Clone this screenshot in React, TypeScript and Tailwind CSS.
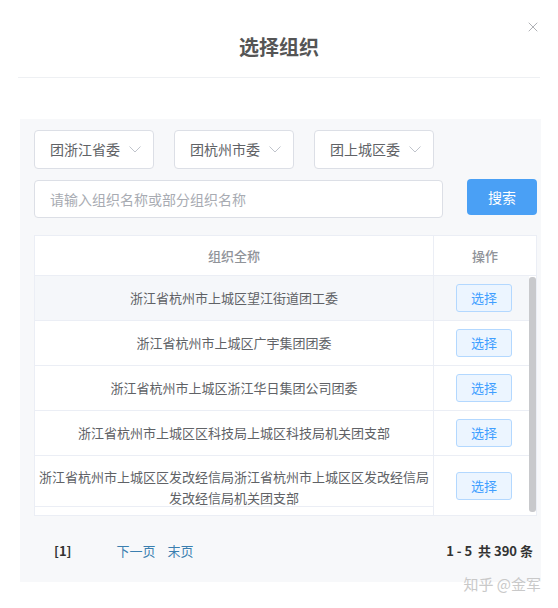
import { X } from "lucide-react";

const rows = [
  "浙江省杭州市上城区望江街道团工委",
  "浙江省杭州市上城区广宇集团团委",
  "浙江省杭州市上城区浙江华日集团公司团委",
  "浙江省杭州市上城区区科技局上城区科技局机关团支部",
];

const selects = ["团浙江省委", "团杭州市委", "团上城区委"];

function Chevron() {
  return (
    <svg width="12" height="7" viewBox="0 0 12 7" fill="none">
      <path d="M0.5 0.5L6 6L11.5 0.5" stroke="#c0c4cc" strokeWidth="1" />
    </svg>
  );
}

function PickButton() {
  return (
    <button className="h-[28px] w-[56px] rounded-[3px] border border-[#b3d8ff] bg-[#ecf5ff] text-[13px] text-[#409eff]">
      选择
    </button>
  );
}

export default function App() {
  return (
    <div
      className="relative h-[608px] w-[558px] overflow-hidden bg-white"
      style={{ fontFamily: '"Noto Sans CJK SC", "Liberation Sans", sans-serif' }}
    >
      {/* 标题 */}
      <div className="relative mx-[18px] flex h-[78px] items-center justify-center border-b border-[#eef0f3] pt-[17px]">
        <h1 className="text-[20px] font-bold text-[#555]">选择组织</h1>
        <button className="absolute right-[-1px] top-[19px] text-[#9a9da2]">
          <X size={16} strokeWidth={1.2} />
        </button>
      </div>

      {/* 面板 */}
      <div className="ml-[20px] mt-[41px] h-[463px] w-[521px] bg-[#f7f8fa] pl-[14px] pr-[4px] pt-[11px]">
        <div className="flex gap-[20px]">
          {selects.map((s) => (
            <div
              key={s}
              className="flex h-[39px] w-[120px] items-center justify-between rounded-[4px] border border-[#dcdfe6] bg-white pl-[15px] pr-[12px] text-[14px] text-[#606266]"
            >
              <span>{s}</span>
              <Chevron />
            </div>
          ))}
        </div>

        <div className="mt-[11px] flex items-start justify-between">
          <div className="flex h-[38px] w-[409px] items-center rounded-[4px] border border-[#dcdfe6] bg-white pl-[15px] text-[14px] text-[#a8abb2]">
            请输入组织名称或部分组织名称
          </div>
          <button className="mt-[-1px] h-[36px] w-[70px] rounded-[4px] bg-[#4aa0f5] text-[14px] text-white">
            搜索
          </button>
        </div>

        {/* 表格 */}
        <div className="mt-[17px] w-[503px] border border-[#ebeef5] bg-white text-[13px] text-[#606266]">
          <div className="flex h-[40px] border-b border-[#ebeef5] text-[#909399]">
            <div className="flex w-[399px] items-center justify-center border-r border-[#ebeef5] font-medium">
              组织全称
            </div>
            <div className="flex flex-1 items-center justify-center font-medium">操作</div>
          </div>

          <div className="flex h-[239px] overflow-hidden">
            <div className="flex-1">
              {rows.map((r, i) => (
                <div
                  key={r}
                  className={`flex h-[45px] border-b border-[#ebeef5] ${i === 0 ? "bg-[#f5f7fa]" : ""}`}
                >
                  <div className="flex w-[399px] items-center justify-center border-r border-[#ebeef5]">
                    {r}
                  </div>
                  <div className="flex flex-1 items-center justify-center pl-[5px]">
                    <PickButton />
                  </div>
                </div>
              ))}
              <div className="flex h-[60px]">
                <div className="w-[399px] border-r border-[#ebeef5]">
                  <div className="h-[51px] border-b border-[#ebeef5] pt-[10px] text-center leading-[21px]">
                    浙江省杭州市上城区区发改经信局浙江省杭州市上城区区发改经信局
                    <br />
                    发改经信局机关团支部
                  </div>
                </div>
                <div className="flex flex-1 items-center justify-center pl-[5px]">
                  <PickButton />
                </div>
              </div>
            </div>
            <div className="w-[7px] pb-[3px] pt-[1px]">
              <div className="h-full rounded-[3px] bg-[#c8c9cc]" />
            </div>
          </div>
        </div>

        {/* 分页 */}
        <div className="flex h-[66px] items-center pl-[20px] pr-[4px] pt-[3px] text-[13px]">
          <span className="font-bold text-[#333]">[1]</span>
          <span className="ml-[45px] text-[#3b7fb0]">下一页</span>
          <span className="ml-[12px] text-[#3b7fb0]">末页</span>
          <span className="ml-auto font-bold text-[#333]">1 - 5&nbsp;&nbsp;共 390 条</span>
        </div>
      </div>

      {/* 水印 */}
      <div className="absolute right-[17px] top-[573px] text-[15px] text-[#c9c9c9]">知乎 @金军</div>
    </div>
  );
}
